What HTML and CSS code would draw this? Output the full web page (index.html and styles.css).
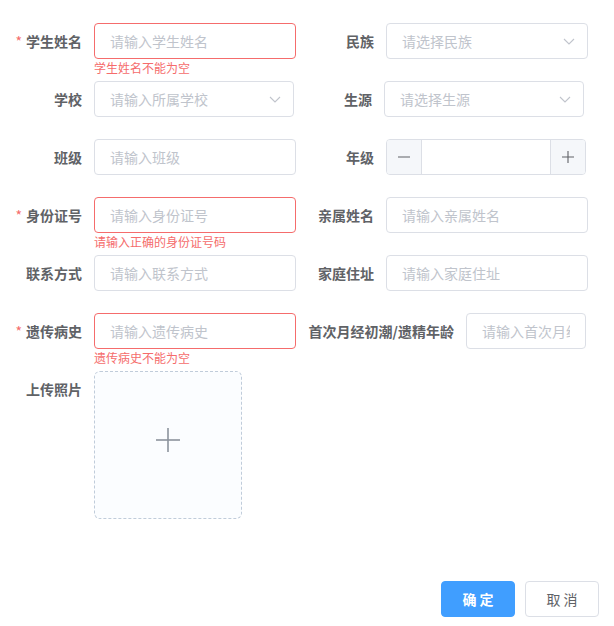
FILE: index.html
```html
<!DOCTYPE html>
<html lang="zh-CN">
<head>
<meta charset="utf-8">
<link rel="stylesheet" href="styles.css">
</head>
<body>
<form class="form">
  <div class="grid">
    <div class="item">
      <label class="label"><span class="req">*</span>学生姓名</label>
      <div class="content">
        <div class="input is-error"><span class="ph">请输入学生姓名</span></div>
        <div class="error">学生姓名不能为空</div>
      </div>
    </div>
    <div class="item">
      <label class="label">民族</label>
      <div class="content">
        <div class="input select"><span class="ph">请选择民族</span>
          <svg class="arrow" viewBox="0 0 12 7" width="12" height="7"><polyline points="1,1 6,6 11,1" fill="none" stroke="#c0c4cc" stroke-width="1.1"/></svg>
        </div>
      </div>
    </div>

    <div class="item">
      <label class="label">学校</label>
      <div class="content">
        <div class="input select w200"><span class="ph">请输入所属学校</span>
          <svg class="arrow" viewBox="0 0 12 7" width="12" height="7"><polyline points="1,1 6,6 11,1" fill="none" stroke="#c0c4cc" stroke-width="1.1"/></svg>
        </div>
      </div>
    </div>
    <div class="item shift">
      <label class="label">生源</label>
      <div class="content">
        <div class="input select w200"><span class="ph">请选择生源</span>
          <svg class="arrow" viewBox="0 0 12 7" width="12" height="7"><polyline points="1,1 6,6 11,1" fill="none" stroke="#c0c4cc" stroke-width="1.1"/></svg>
        </div>
      </div>
    </div>

    <div class="item">
      <label class="label">班级</label>
      <div class="content">
        <div class="input"><span class="ph">请输入班级</span></div>
      </div>
    </div>
    <div class="item">
      <label class="label">年级</label>
      <div class="content">
        <div class="number w200">
          <span class="num-btn dec"><svg viewBox="0 0 14 14" width="14" height="14"><line x1="1" y1="7" x2="13" y2="7" stroke="#606266" stroke-width="1.1"/></svg></span>
          <span class="num-field"></span>
          <span class="num-btn inc"><svg viewBox="0 0 14 14" width="14" height="14"><line x1="1" y1="7" x2="13" y2="7" stroke="#606266" stroke-width="1.1"/><line x1="7" y1="1" x2="7" y2="13" stroke="#606266" stroke-width="1.1"/></svg></span>
        </div>
      </div>
    </div>

    <div class="item">
      <label class="label"><span class="req">*</span>身份证号</label>
      <div class="content">
        <div class="input is-error"><span class="ph">请输入身份证号</span></div>
        <div class="error">请输入正确的身份证号码</div>
      </div>
    </div>
    <div class="item">
      <label class="label">亲属姓名</label>
      <div class="content">
        <div class="input"><span class="ph">请输入亲属姓名</span></div>
      </div>
    </div>

    <div class="item">
      <label class="label">联系方式</label>
      <div class="content">
        <div class="input"><span class="ph">请输入联系方式</span></div>
      </div>
    </div>
    <div class="item">
      <label class="label">家庭住址</label>
      <div class="content">
        <div class="input"><span class="ph">请输入家庭住址</span></div>
      </div>
    </div>

    <div class="item">
      <label class="label"><span class="req">*</span>遗传病史</label>
      <div class="content">
        <div class="input is-error"><span class="ph">请输入遗传病史</span></div>
        <div class="error">遗传病史不能为空</div>
      </div>
    </div>
    <div class="item">
      <label class="label wide">首次月经初潮/遗精年龄</label>
      <div class="content">
        <div class="input w120"><span class="ph">请输入首次月经初潮/遗精年龄</span></div>
      </div>
    </div>

    <div class="item">
      <label class="label">上传照片</label>
      <div class="content">
        <div class="upload">
          <svg class="plus" viewBox="0 0 28 28" width="28" height="28"><line x1="2" y1="14" x2="26" y2="14" stroke="#8c939d" stroke-width="1.6"/><line x1="14" y1="2" x2="14" y2="26" stroke="#8c939d" stroke-width="1.6"/></svg>
        </div>
      </div>
    </div>
  </div>

  <div class="footer">
    <button type="button" class="btn primary">确 定</button>
    <button type="button" class="btn">取 消</button>
  </div>
</form>
</body>
</html>
```

FILE: styles.css
```css
* { box-sizing: border-box; }
html, body {
  margin: 0;
  padding: 0;
  background: #fff;
}
body {
  font-family: "Noto Sans CJK SC", "Noto Sans", "Liberation Sans", sans-serif;
  font-size: 14px;
  color: #606266;
  width: 614px;
  height: 626px;
}
.form {
  padding: 23px 15px 0 14px;
}
.grid {
  display: grid;
  grid-template-columns: 282px 282px;
  column-gap: 10px;
  row-gap: 22px;
}
.item {
  display: flex;
  align-items: flex-start;
}
.item.shift {
  margin-left: -2px;
}
.label {
  flex: none;
  width: 80px;
  padding-right: 12px;
  text-align: right;
  line-height: 36px;
  height: 36px;
  font-size: 14px;
  font-weight: 700;
  color: #606266;
  white-space: nowrap;
}
.label.wide {
  width: 160px;
}
.req {
  color: #f56c6c;
  margin-right: 4px;
  font-weight: 400;
}
.content {
  position: relative;
  flex: 1;
  min-width: 0;
}
.input {
  position: relative;
  height: 36px;
  border: 1px solid #dcdfe6;
  border-radius: 4px;
  padding: 0 15px;
  line-height: 34px;
  background: #fff;
  white-space: nowrap;
}
.input.is-error {
  border-color: #f56c6c;
}
.ph {
  display: block;
  overflow: hidden;
  color: #c0c4cc;
  font-size: 14px;
}
.select {
  padding-right: 30px;
}
.arrow {
  position: absolute;
  right: 12px;
  top: 14px;
}
.w200 { width: 200px; }
.w120 { width: 120px; }
.error {
  position: absolute;
  left: 0;
  top: 100%;
  padding-top: 3px;
  font-size: 12px;
  line-height: 1;
  color: #f56c6c;
  white-space: nowrap;
}
.number {
  display: flex;
  height: 36px;
  border: 1px solid #dcdfe6;
  border-radius: 4px;
  overflow: hidden;
}
.num-btn {
  flex: none;
  width: 35px;
  display: flex;
  align-items: center;
  justify-content: center;
  background: #f5f7fa;
}
.num-btn.dec { border-right: 1px solid #dcdfe6; }
.num-btn.inc { border-left: 1px solid #dcdfe6; }
.num-field { flex: 1; }
.upload {
  width: 148px;
  height: 148px;
  border: 1px dashed #c0ccda;
  border-radius: 6px;
  background: #fbfdff;
  display: flex;
  align-items: center;
  justify-content: center;
}
.plus {
  margin-top: -10px;
}
.footer {
  display: flex;
  justify-content: flex-end;
  gap: 10px;
  margin-top: 62px;
}
.btn {
  width: 74px;
  height: 36px;
  border: 1px solid #dcdfe6;
  border-radius: 4px;
  background: #fff;
  color: #606266;
  font-family: "Noto Sans CJK SC", "Noto Sans", sans-serif;
  font-size: 14px;
  padding: 0;
  line-height: 34px;
}
.btn.primary {
  background: #409eff;
  border-color: #409eff;
  color: #fff;
  font-weight: 700;
}
```
